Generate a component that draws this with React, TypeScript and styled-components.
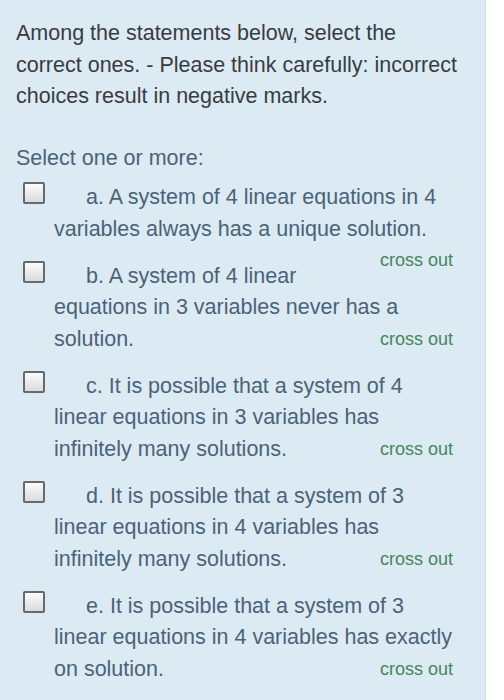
import React from "react";
import styled, { createGlobalStyle } from "styled-components";

const GlobalStyle = createGlobalStyle`
  html, body {
    margin: 0;
    padding: 0;
    background: #ffffff;
  }
  body {
    font-family: "Liberation Sans", Arial, Helvetica, sans-serif;
  }
`;

type Option = {
  lines: string[];
  // the link does not fit after the last line and drops below it
  crossOutBelow?: boolean;
};

const options: Option[] = [
  {
    lines: ["a. A system of 4 linear equations in 4", "variables always has a unique solution."],
    crossOutBelow: true,
  },
  { lines: ["b. A system of 4 linear", "equations in 3 variables never has a", "solution."] },
  {
    lines: ["c. It is possible that a system of 4", "linear equations in 3 variables has", "infinitely many solutions."],
  },
  {
    lines: ["d. It is possible that a system of 3", "linear equations in 4 variables has", "infinitely many solutions."],
  },
  {
    lines: ["e. It is possible that a system of 3", "linear equations in 4 variables has exactly", "on solution."],
  },
];

const questionLines = [
  "Among the statements below, select the",
  "correct ones. - Please think carefully: incorrect",
  "choices result in negative marks.",
];

const withBreaks = (lines: string[]) =>
  lines.map((line, i) => (
    <React.Fragment key={i}>
      {i > 0 && <br />}
      {line}
    </React.Fragment>
  ));

const App = () => {
  return (
    <>
      <GlobalStyle />
      <Panel>
        <QuestionText>{withBreaks(questionLines)}</QuestionText>
        <Prompt>Select one or more:</Prompt>
        <AnswerList>
          {options.map((opt, i) => (
            <AnswerRow key={i}>
              <CheckBox role="checkbox" aria-checked="false" />
              <AnswerLabel>{withBreaks(opt.lines)}</AnswerLabel>
              {opt.crossOutBelow && <br />}
              <CrossOut>cross out</CrossOut>
            </AnswerRow>
          ))}
        </AnswerList>
      </Panel>
    </>
  );
};

export default App;

const Panel = styled.div`
  box-sizing: border-box;
  width: 486px;
  min-height: 700px;
  padding: 18px 22px 16px 16px;
  background: #dceaf4;
  border-right: 1px solid #cbdeeb;
  font-size: 21.5px;
  line-height: 31.5px;
  white-space: nowrap;
`;

const QuestionText = styled.div`
  color: #383c41;
`;

const Prompt = styled.div`
  margin-top: 30.5px;
  color: #4a6378;
`;

const AnswerList = styled.div`
  margin-top: 7.5px;
  margin-right: 8px;
  color: #4a6378;
`;

const AnswerRow = styled.div`
  padding-left: 38px;
  text-indent: -31px;

  & + & {
    margin-top: 15.5px;
  }
`;

const CheckBox = styled.span`
  display: inline-block;
  width: 22px;
  height: 22px;
  box-sizing: border-box;
  margin-right: 41px;
  border: 2px solid #666a6e;
  border-radius: 2px;
  background: linear-gradient(#fbfbfb, #dadbdd);
  vertical-align: baseline;
`;

const AnswerLabel = styled.span``;

const CrossOut = styled.span`
  float: right;
  text-indent: 0;
  margin-right: 2px;
  font-size: 18px;
  color: #43875a;
`;
